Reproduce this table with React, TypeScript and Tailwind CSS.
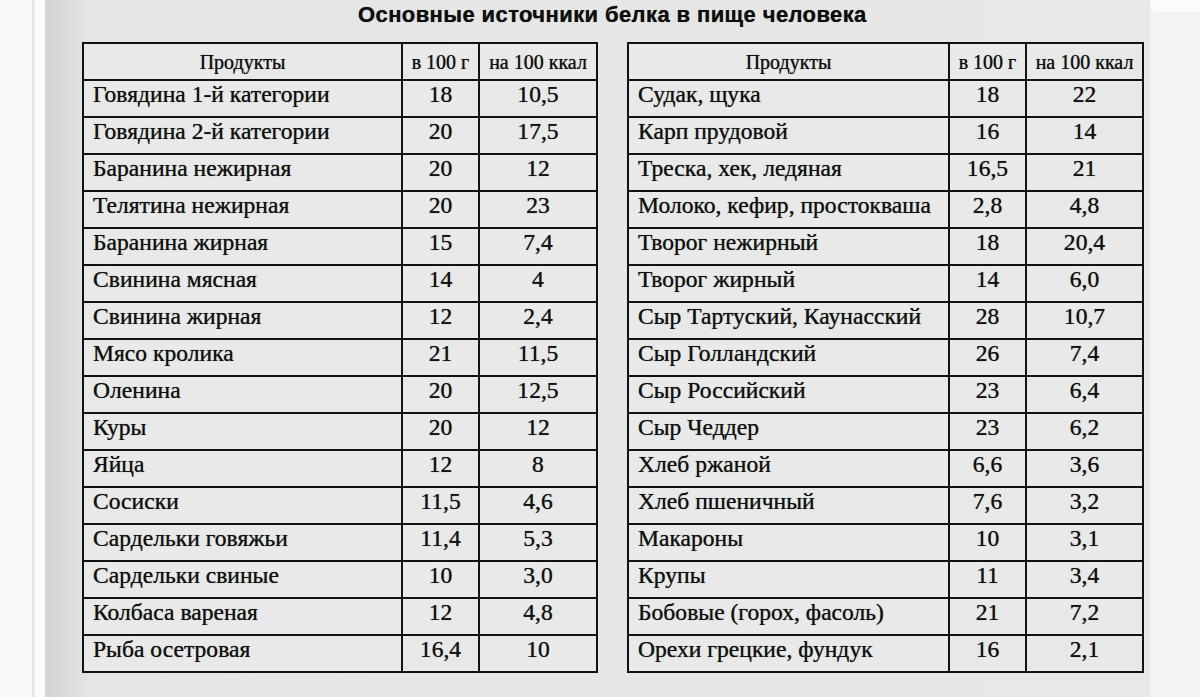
import React from 'react'

type Row = [string, string, string]

const leftRows: Row[] = [
  ['Говядина 1-й категории', '18', '10,5'],
  ['Говядина 2-й категории', '20', '17,5'],
  ['Баранина нежирная', '20', '12'],
  ['Телятина нежирная', '20', '23'],
  ['Баранина жирная', '15', '7,4'],
  ['Свинина мясная', '14', '4'],
  ['Свинина жирная', '12', '2,4'],
  ['Мясо кролика', '21', '11,5'],
  ['Оленина', '20', '12,5'],
  ['Куры', '20', '12'],
  ['Яйца', '12', '8'],
  ['Сосиски', '11,5', '4,6'],
  ['Сардельки говяжьи', '11,4', '5,3'],
  ['Сардельки свиные', '10', '3,0'],
  ['Колбаса вареная', '12', '4,8'],
  ['Рыба осетровая', '16,4', '10'],
]

const rightRows: Row[] = [
  ['Судак, щука', '18', '22'],
  ['Карп прудовой', '16', '14'],
  ['Треска, хек, ледяная', '16,5', '21'],
  ['Молоко, кефир, простокваша', '2,8', '4,8'],
  ['Творог нежирный', '18', '20,4'],
  ['Творог жирный', '14', '6,0'],
  ['Сыр Тартуский, Каунасский', '28', '10,7'],
  ['Сыр Голландский', '26', '7,4'],
  ['Сыр Российский', '23', '6,4'],
  ['Сыр Чеддер', '23', '6,2'],
  ['Хлеб ржаной', '6,6', '3,6'],
  ['Хлеб пшеничный', '7,6', '3,2'],
  ['Макароны', '10', '3,1'],
  ['Крупы', '11', '3,4'],
  ['Бобовые (горох, фасоль)', '21', '7,2'],
  ['Орехи грецкие, фундук', '16', '2,1'],
]

interface TableProps {
  rows: Row[]
  widths: [string, string, string]
}

const ProteinTable = ({ rows, widths }: TableProps) => {
  return (
    <div className="border-t-2 border-l-2 border-[#121212] bg-[#e9e9e9]">
      <div className="flex h-[37px] border-b-2 border-[#121212] text-[20px] leading-[24px]">
        <div className={`${widths[0]} flex items-center justify-center border-r-2 border-[#121212]`}>
          Продукты
        </div>
        <div className={`${widths[1]} flex items-center justify-center border-r-2 border-[#121212]`}>
          в 100 г
        </div>
        <div className={`${widths[2]} flex items-center justify-center border-r-2 border-[#121212]`}>
          на 100 ккал
        </div>
      </div>
      {rows.map((row, i) => (
        <div
          key={i}
          className="flex h-[37px] border-b-2 border-[#121212] text-[23.6px] leading-[24px]"
        >
          <div className={`${widths[0]} pl-[9px] pt-[1px] border-r-2 border-[#121212] whitespace-nowrap`}>
            {row[0]}
          </div>
          <div className={`${widths[1]} pt-[1px] text-center border-r-2 border-[#121212]`}>
            {row[1]}
          </div>
          <div className={`${widths[2]} pt-[1px] text-center border-r-2 border-[#121212]`}>
            {row[2]}
          </div>
        </div>
      ))}
    </div>
  )
}

export default function App() {
  return (
    <div
      className="flex w-[1200px] h-[697px] overflow-hidden bg-[#f7f7f7] text-[#111111] [text-shadow:0_0_0.7px_rgba(0,0,0,0.7)]"
      style={{ fontFamily: '"Liberation Serif", "Times New Roman", serif' }}
    >
      <div className="w-[32px] bg-[#f8f8f8]" />
      <div className="w-[3px] bg-gradient-to-r from-[#e2e2e2] to-[#f0f0f0]" />
      <div className="w-[10px] bg-[#fbfbfb]" />

      {/* scanned page */}
      <div className="w-[1105px] flex flex-col bg-gradient-to-r from-[#d2d2d2] via-[#e5e5e5] via-[4%] to-[#e8e8e8]">
        <div className="h-[42px] pl-[313px] pt-[3px]">
          <h1
            className="text-[22px] leading-[24px] font-bold tracking-[0.4px] text-[#0e0e0e]"
            style={{ fontFamily: '"Liberation Sans", Arial, sans-serif' }}
          >
            Основные источники белка в пище человека
          </h1>
        </div>
        <div className="flex pl-[37px] gap-[29px]">
          <ProteinTable rows={leftRows} widths={['w-[319px]', 'w-[77px]', 'w-[118px]']} />
          <ProteinTable rows={rightRows} widths={['w-[321px]', 'w-[77px]', 'w-[117px]']} />
        </div>
      </div>

      <div className="flex-1 flex flex-col bg-[#f3f3f3]">
        <div className="h-[12px] bg-[#fbfbfb] rounded-bl-[8px]" />
      </div>
    </div>
  )
}
